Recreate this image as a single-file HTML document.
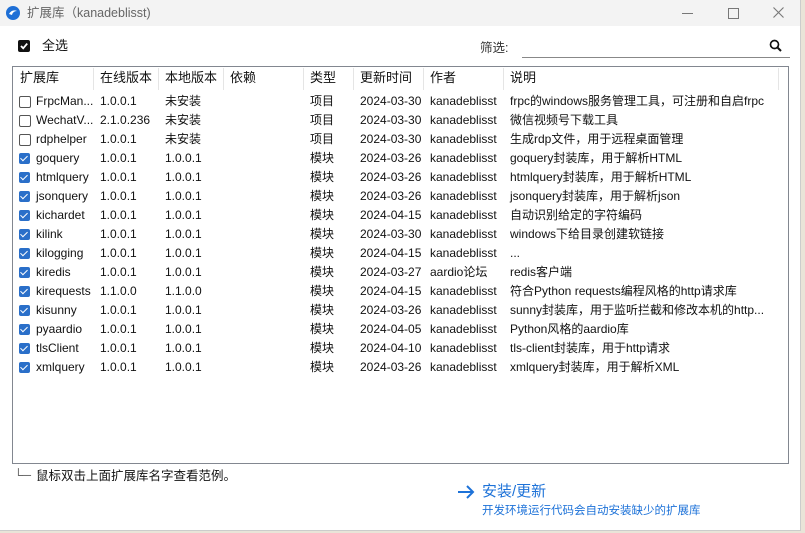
<!DOCTYPE html><html><head><meta charset="utf-8"><style>
body{margin:0;width:805px;height:533px;background:#e9e4d8;font-family:"Liberation Sans","Noto Sans CJK SC",sans-serif;font-size:12px;color:#111;position:relative;overflow:hidden}
.win{position:absolute;left:0;top:0;width:800px;height:530px;background:#fff;border-right:1px solid #ccc;border-bottom:1px solid #ccc}
.title{position:absolute;left:0;top:0;width:800px;height:26px;background:#f3f3f3}
.t{position:absolute;white-space:nowrap;line-height:16px;height:16px}
.list{position:absolute;left:12px;top:66px;width:777px;height:398px;border:1px solid #828790;box-sizing:border-box}
.sep{position:absolute;top:1px;height:22px;width:1px;background:#e5e5e5}
.cb{position:absolute;left:6px;width:11px;height:11px;border-radius:2px}
.on{background:#2a6fc9}
.on:after{content:"";position:absolute;left:3px;top:1px;width:3px;height:6px;border:solid #fff;border-width:0 1.5px 1.5px 0;transform:rotate(45deg)}
.off{border:1px solid #555;width:10px;height:10px;background:#fff}
</style></head><body><div class="win">
<div class="title">
<svg style="position:absolute;left:6px;top:6px" width="14" height="14" viewBox="0 0 14 14"><circle cx="7" cy="7" r="7" fill="#1e6fd6"/><path d="M3 8 Q6 3 11 5 Q7 5 6 9Z" fill="#fff"/></svg>
<span class="t" style="left:27px;top:5px;color:#666;font-size:12.5px">扩展库（kanadeblisst)</span>
<div style="position:absolute;left:682px;top:13px;width:11px;height:1px;background:#777"></div>
<div style="position:absolute;left:728px;top:8px;width:9px;height:9px;border:1px solid #777"></div>
<svg style="position:absolute;left:773px;top:7px" width="11" height="11"><path d="M0.5 0.5 L10.5 10.5 M10.5 0.5 L0.5 10.5" stroke="#777" stroke-width="1.1"/></svg>
</div>
<div style="position:absolute;left:18px;top:40px;width:12px;height:12px;background:#111;border-radius:2px"></div>
<svg style="position:absolute;left:19px;top:41px" width="10" height="10"><path d="M2 5 L4.2 7.3 L8.2 2.6" stroke="#fff" stroke-width="1.8" fill="none"/></svg>
<span class="t" style="left:42px;top:38px;font-size:13px">全选</span>
<span class="t" style="left:480px;top:40px;color:#333;font-size:12.5px">筛选:</span>
<div style="position:absolute;left:522px;top:57px;width:268px;height:1px;background:#888"></div>
<svg style="position:absolute;left:769px;top:39px" width="14" height="14"><circle cx="5.5" cy="5.5" r="4" stroke="#111" stroke-width="1.7" fill="none"/><path d="M8.5 8.5 L12 12" stroke="#111" stroke-width="2"/></svg>
<div class="list">
<div class="sep" style="left:80px"></div><div class="sep" style="left:145px"></div><div class="sep" style="left:210px"></div><div class="sep" style="left:290px"></div><div class="sep" style="left:340px"></div><div class="sep" style="left:410px"></div><div class="sep" style="left:490px"></div><div class="sep" style="left:765px"></div>
<div id="rows"></div>
</div>
<span class="t" style="left:14px;top:467px;color:#555;font-size:12px">└─</span>
<span class="t" style="left:36px;top:468px;font-size:12.5px">鼠标双击上面扩展库名字查看范例。</span>
<svg style="position:absolute;left:457px;top:485px" width="18" height="14"><path d="M1 7 H16 M10 1 L16 7 L10 13" stroke="#1d72d8" stroke-width="2" fill="none"/></svg>
<span class="t" style="left:482px;top:482px;color:#1d72d8;font-size:15px;line-height:20px;height:20px">安装/更新</span>
<span class="t" style="left:482px;top:503px;color:#1d72d8;font-size:11.5px">开发环境运行代码会自动安装缺少的扩展库</span>
</div>
<script>
var H=[["扩展库",7],["在线版本",87],["本地版本",152],["依赖",217],["类型",297],["更新时间",347],["作者",417],["说明",497]];
var R=[[0,"FrpcMan...","1.0.0.1","未安装","项目","2024-03-30","kanadeblisst","frpc的windows服务管理工具，可注册和自启frpc"],
[0,"WechatV...","2.1.0.236","未安装","项目","2024-03-30","kanadeblisst","微信视频号下载工具"],
[0,"rdphelper","1.0.0.1","未安装","项目","2024-03-30","kanadeblisst","生成rdp文件，用于远程桌面管理"],
[1,"goquery","1.0.0.1","1.0.0.1","模块","2024-03-26","kanadeblisst","goquery封装库，用于解析HTML"],
[1,"htmlquery","1.0.0.1","1.0.0.1","模块","2024-03-26","kanadeblisst","htmlquery封装库，用于解析HTML"],
[1,"jsonquery","1.0.0.1","1.0.0.1","模块","2024-03-26","kanadeblisst","jsonquery封装库，用于解析json"],
[1,"kichardet","1.0.0.1","1.0.0.1","模块","2024-04-15","kanadeblisst","自动识别给定的字符编码"],
[1,"kilink","1.0.0.1","1.0.0.1","模块","2024-03-30","kanadeblisst","windows下给目录创建软链接"],
[1,"kilogging","1.0.0.1","1.0.0.1","模块","2024-04-15","kanadeblisst","..."],
[1,"kiredis","1.0.0.1","1.0.0.1","模块","2024-03-27","aardio论坛","redis客户端"],
[1,"kirequests","1.1.0.0","1.1.0.0","模块","2024-04-15","kanadeblisst","符合Python requests编程风格的http请求库"],
[1,"kisunny","1.0.0.1","1.0.0.1","模块","2024-03-26","kanadeblisst","sunny封装库，用于监听拦截和修改本机的http..."],
[1,"pyaardio","1.0.0.1","1.0.0.1","模块","2024-04-05","kanadeblisst","Python风格的aardio库"],
[1,"tlsClient","1.0.0.1","1.0.0.1","模块","2024-04-10","kanadeblisst","tls-client封装库，用于http请求"],
[1,"xmlquery","1.0.0.1","1.0.0.1","模块","2024-03-26","kanadeblisst","xmlquery封装库，用于解析XML"]];
var h="";H.forEach(function(c){h+='<span class="t" style="left:'+c[1]+'px;top:3px;font-size:13px">'+c[0]+'</span>'});
var X=[23,87,152,297,347,417,497];
R.forEach(function(r,i){var y=26+i*19;h+='<div class="cb '+(r[0]?'on':'off')+'" style="top:'+(y+3)+'px"></div>';
var v=[r[1],r[2],r[3],r[4],r[5],r[6],r[7]];v.forEach(function(s,j){h+='<span class="t" style="left:'+X[j]+'px;top:'+y+'px">'+s+'</span>'})});
document.getElementById("rows").innerHTML=h;
</script></body></html>
